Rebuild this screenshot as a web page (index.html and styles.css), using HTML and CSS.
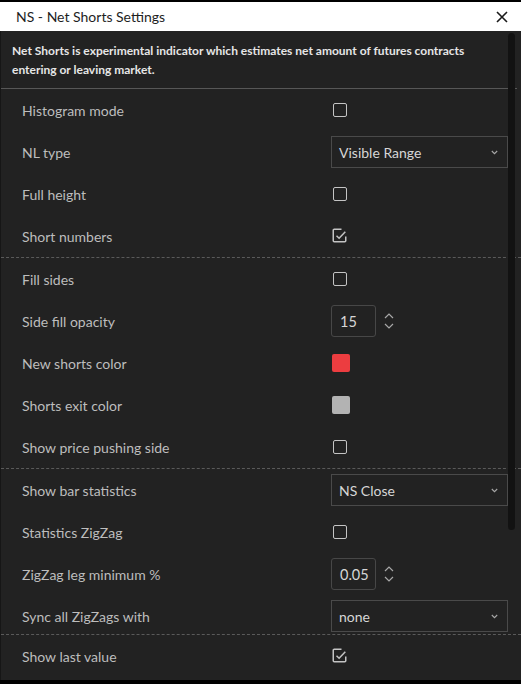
FILE: index.html
```html
<!DOCTYPE html>
<html>
<head>
<meta charset="utf-8">
<link rel="stylesheet" href="styles.css">
</head>
<body>
<div class="dialog">
  <div class="titlebar">
    <span class="title">NS - Net Shorts Settings</span>
    <svg class="close" width="12" height="12" viewBox="0 0 12 12"><path d="M1 1L11 11M11 1L1 11" stroke="#1a1a1a" stroke-width="1.6" fill="none"/></svg>
  </div>
  <div class="content">
    <div class="desc">Net Shorts is experimental indicator which estimates net amount of futures contracts entering or leaving market.</div>

    <div class="section">
      <div class="row"><span class="label">Histogram mode</span><span class="cb"></span></div>
      <div class="row"><span class="label">NL type</span>
        <div class="select"><span>Visible Range</span><svg class="chev" width="7" height="5" viewBox="0 0 7 5"><path d="M0.8 1L3.5 3.7L6.2 1" stroke="#a8a8a8" stroke-width="1.1" fill="none"/></svg></div>
      </div>
      <div class="row"><span class="label">Full height</span><span class="cb"></span></div>
      <div class="row"><span class="label">Short numbers</span>
        <svg class="cbx" width="16" height="16" viewBox="0 0 16 16"><path d="M13.75 8.5v4.25a1 1 0 0 1-1 1H2.25a1 1 0 0 1-1-1V2.25a1 1 0 0 1 1-1H9.5" stroke="#c4c4c4" stroke-width="1.5" fill="none"/><path d="M4.5 7.8l2.6 2.5 6.2-6.6" stroke="#c4c4c4" stroke-width="1.5" fill="none"/></svg>
      </div>
    </div>

    <div class="section">
      <div class="row"><span class="label">Fill sides</span><span class="cb"></span></div>
      <div class="row"><span class="label">Side fill opacity</span>
        <div class="num"><span class="numbox">15</span><svg class="spin" width="10" height="18" viewBox="0 0 10 18"><path d="M1 6L5 2L9 6M1 12L5 16L9 12" stroke="#a8a8a8" stroke-width="1.2" fill="none"/></svg></div>
      </div>
      <div class="row"><span class="label">New shorts color</span><span class="swatch red"></span></div>
      <div class="row"><span class="label">Shorts exit color</span><span class="swatch gray"></span></div>
      <div class="row"><span class="label">Show price pushing side</span><span class="cb"></span></div>
    </div>

    <div class="section">
      <div class="row"><span class="label">Show bar statistics</span>
        <div class="select"><span>NS Close</span><svg class="chev" width="7" height="5" viewBox="0 0 7 5"><path d="M0.8 1L3.5 3.7L6.2 1" stroke="#a8a8a8" stroke-width="1.1" fill="none"/></svg></div>
      </div>
      <div class="row"><span class="label">Statistics ZigZag</span><span class="cb"></span></div>
      <div class="row"><span class="label">ZigZag leg minimum %</span>
        <div class="num"><span class="numbox">0.05</span><svg class="spin" width="10" height="18" viewBox="0 0 10 18"><path d="M1 6L5 2L9 6M1 12L5 16L9 12" stroke="#a8a8a8" stroke-width="1.2" fill="none"/></svg></div>
      </div>
      <div class="row tight"><span class="label">Sync all ZigZags with</span>
        <div class="select"><span>none</span><svg class="chev" width="7" height="5" viewBox="0 0 7 5"><path d="M0.8 1L3.5 3.7L6.2 1" stroke="#a8a8a8" stroke-width="1.1" fill="none"/></svg></div>
      </div>
    </div>

    <div class="section last">
      <div class="row"><span class="label">Show last value</span>
        <svg class="cbx" width="16" height="16" viewBox="0 0 16 16"><path d="M13.75 8.5v4.25a1 1 0 0 1-1 1H2.25a1 1 0 0 1-1-1V2.25a1 1 0 0 1 1-1H9.5" stroke="#c4c4c4" stroke-width="1.5" fill="none"/><path d="M4.5 7.8l2.6 2.5 6.2-6.6" stroke="#c4c4c4" stroke-width="1.5" fill="none"/></svg>
      </div>
    </div>

    <div class="scrollthumb"></div>
  </div>
</div>
</body>
</html>
```
FILE: styles.css
```css
html, body {
  margin: 0;
  padding: 0;
  background: #000;
}
body {
  font-family: Lato, "Open Sans", sans-serif;
  width: 521px;
  height: 684px;
  overflow: hidden;
}
.dialog {
  margin-top: 2px;
  height: 678px;
  display: flex;
  flex-direction: column;
  background: #222222;
}
.titlebar {
  height: 29px;
  flex: none;
  background: #fff;
  display: flex;
  align-items: center;
  justify-content: space-between;
  padding: 0 13px 0 16px;
}
.title {
  font-size: 14px;
  color: #1e1e1e;
}
.close {
  display: block;
}
.content {
  flex: 1;
  position: relative;
  overflow: hidden;
  border-left: 1px solid #161616;
}
.desc {
  padding: 10px 30px 9px 11px;
  font-size: 12px;
  font-weight: 700;
  line-height: 19px;
  color: #e6e6e6;
  border-bottom: 1px solid #575757;
  margin-right: 4px;
}
.section {
  border-bottom: 1px dashed #5a5a5a;
}
.section.last {
  border-bottom: none;
}
.row {
  height: 42px;
  display: grid;
  grid-template-columns: 309px 1fr;
  align-items: center;
  padding-left: 21px;
  padding-right: 13px;
}
.row.tight {
  height: 39px;
  align-items: start;
  padding-top: 5px;
  box-sizing: border-box;
}
.row.tight .label {
  margin-top: 8px;
}
.label {
  font-size: 14px;
  color: #bdbdbd;
}
.cb {
  width: 12px;
  height: 12px;
  margin-left: 2px;
  border: 1.5px solid #c4c4c4;
  border-radius: 2px;
}
.cbx {
  display: block;
  margin-left: 1px;
}
.select {
  height: 32px;
  box-sizing: border-box;
  border: 1px solid #4a4a4a;
  display: flex;
  align-items: center;
  justify-content: space-between;
  padding: 0 9px 0 7px;
  font-size: 14px;
  color: #d6d6d6;
}
.chev {
  display: block;
}
.num {
  display: flex;
  align-items: center;
  gap: 8px;
}
.numbox {
  width: 45px;
  height: 32px;
  box-sizing: border-box;
  border: 1px solid #474747;
  border-radius: 3px;
  display: flex;
  align-items: center;
  padding-left: 8px;
  font-size: 14.5px;
  color: #d6d6d6;
}
.spin {
  display: block;
}
.swatch {
  width: 18px;
  height: 18px;
  border-radius: 2px;
  margin-left: 1px;
}
.swatch.red {
  background: #ec3d40;
}
.swatch.gray {
  background: #b3b3b3;
}
.scrollthumb {
  position: absolute;
  left: 507px;
  top: 2px;
  width: 7px;
  height: 497px;
  background: #121212;
  border-radius: 4px;
}
```
